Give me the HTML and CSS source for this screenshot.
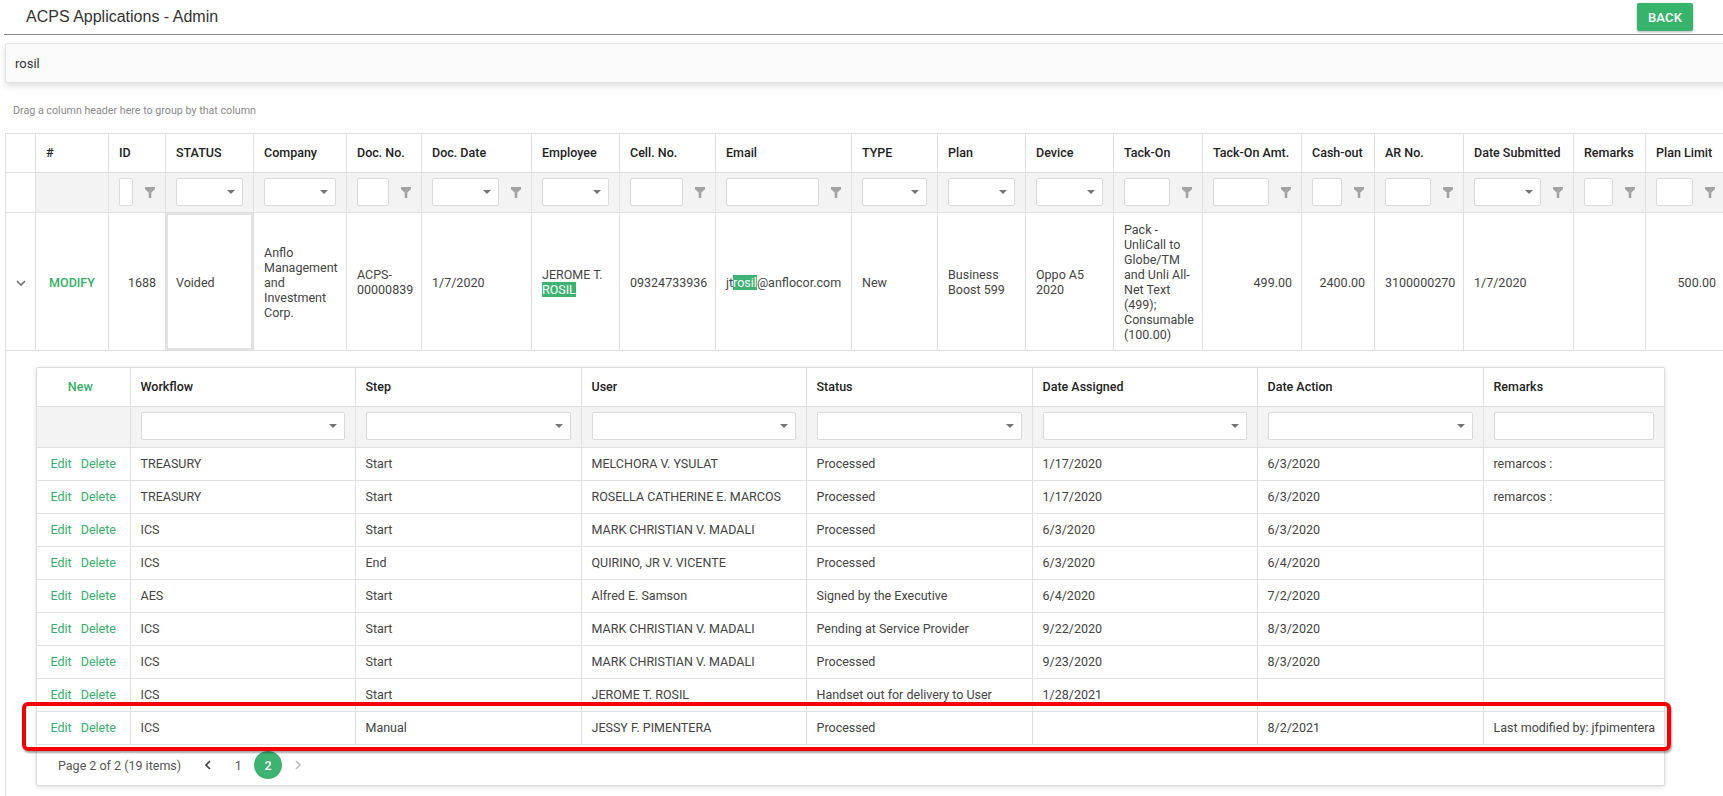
FILE: index.html
```html
<!DOCTYPE html>
<html lang="en">
<head>
<meta charset="utf-8">
<title>ACPS Applications - Admin</title>
<link rel="stylesheet" href="styles.css">
</head>
<body>
<svg class="defs" width="0" height="0" aria-hidden="true">
  <symbol id="funnel" viewBox="0 0 10 11"><path d="M0 0H10V2.2L6.3 5.4V11H3.7V5.4L0 2.2Z"/></symbol>
  <symbol id="caret" viewBox="0 0 8 4"><path d="M0 0H8L4 4Z"/></symbol>
  <symbol id="chev-down" viewBox="0 0 10 6"><polyline points="1,1 5,5 9,1"/></symbol>
  <symbol id="chev-left" viewBox="0 0 6 10"><polyline points="5,1 1,5 5,9"/></symbol>
  <symbol id="chev-right" viewBox="0 0 6 10"><polyline points="1,1 5,5 1,9"/></symbol>
</svg>

<header class="topbar">
  <h1 class="title">ACPS Applications - Admin</h1>
  <button class="btn-back">BACK</button>
</header>

<div class="search">rosil</div>

<div class="group-panel">Drag a column header here to group by that column</div>

<div class="grid-wrap">
<table class="grid">
  <colgroup>
    <col class="w30"><col class="w73"><col class="w57"><col class="w88"><col class="w93">
    <col class="w75"><col class="w110"><col class="w88"><col class="w96"><col class="w136">
    <col class="w86"><col class="w88"><col class="w88"><col class="w89"><col class="w99">
    <col class="w73"><col class="w89"><col class="w110"><col class="w72"><col class="w80">
  </colgroup>
  <thead>
    <tr class="hdr">
      <th></th><th>#</th><th>ID</th><th>STATUS</th><th>Company</th><th>Doc. No.</th><th>Doc. Date</th><th>Employee</th><th>Cell. No.</th><th>Email</th><th>TYPE</th><th>Plan</th><th>Device</th><th>Tack-On</th><th>Tack-On Amt.</th><th>Cash-out</th><th>AR No.</th><th>Date Submitted</th><th>Remarks</th><th>Plan Limit</th>
    </tr>
    <tr class="filters">
      <td class="f-blank"></td>
      <td></td>
      <td><div class="ft"><span class="inp"></span><svg class="fi"><use href="#funnel"/></svg></div></td>
      <td><div class="sel"><svg class="caret"><use href="#caret"/></svg></div></td>
      <td><div class="sel"><svg class="caret"><use href="#caret"/></svg></div></td>
      <td><div class="ft"><span class="inp"></span><svg class="fi"><use href="#funnel"/></svg></div></td>
      <td><div class="ft"><div class="sel"><svg class="caret"><use href="#caret"/></svg></div><svg class="fi"><use href="#funnel"/></svg></div></td>
      <td><div class="sel"><svg class="caret"><use href="#caret"/></svg></div></td>
      <td><div class="ft"><span class="inp"></span><svg class="fi"><use href="#funnel"/></svg></div></td>
      <td><div class="ft"><span class="inp"></span><svg class="fi"><use href="#funnel"/></svg></div></td>
      <td><div class="sel"><svg class="caret"><use href="#caret"/></svg></div></td>
      <td><div class="sel"><svg class="caret"><use href="#caret"/></svg></div></td>
      <td><div class="sel"><svg class="caret"><use href="#caret"/></svg></div></td>
      <td><div class="ft"><span class="inp"></span><svg class="fi"><use href="#funnel"/></svg></div></td>
      <td><div class="ft"><span class="inp"></span><svg class="fi"><use href="#funnel"/></svg></div></td>
      <td><div class="ft"><span class="inp"></span><svg class="fi"><use href="#funnel"/></svg></div></td>
      <td><div class="ft"><span class="inp"></span><svg class="fi"><use href="#funnel"/></svg></div></td>
      <td><div class="ft"><div class="sel"><svg class="caret"><use href="#caret"/></svg></div><svg class="fi"><use href="#funnel"/></svg></div></td>
      <td><div class="ft"><span class="inp"></span><svg class="fi"><use href="#funnel"/></svg></div></td>
      <td><div class="ft"><span class="inp"></span><svg class="fi"><use href="#funnel"/></svg></div></td>
    </tr>
  </thead>
  <tbody>
    <tr class="data">
      <td class="c-expand"><svg class="chev"><use href="#chev-down"/></svg></td>
      <td class="c-center"><span class="link strong">MODIFY</span></td>
      <td class="c-right">1688</td>
      <td class="c-focus">Voided</td>
      <td>Anflo<br>Management<br>and<br>Investment<br>Corp.</td>
      <td>ACPS-<br>00000839</td>
      <td>1/7/2020</td>
      <td>JEROME T.<br><span class="hl">ROSIL</span></td>
      <td>09324733936</td>
      <td>jt<span class="hl">rosil</span>@anflocor.com</td>
      <td>New</td>
      <td>Business<br>Boost 599</td>
      <td>Oppo A5<br>2020</td>
      <td>Pack -<br>UnliCall to<br>Globe/TM<br>and Unli All-<br>Net Text<br>(499);<br>Consumable<br>(100.00)</td>
      <td class="c-right">499.00</td>
      <td class="c-right">2400.00</td>
      <td>3100000270</td>
      <td>1/7/2020</td>
      <td></td>
      <td class="c-right">500.00</td>
    </tr>
    <tr class="detail-row">
      <td colspan="20">
        <div class="detail">
          <table class="dgrid">
            <colgroup>
              <col class="d93"><col class="d225"><col class="d226"><col class="d225"><col class="d226"><col class="d225"><col class="d226"><col class="d181">
            </colgroup>
            <thead>
              <tr class="hdr">
                <th class="th-new"><span class="link">New</span></th><th>Workflow</th><th>Step</th><th>User</th><th>Status</th><th>Date Assigned</th><th>Date Action</th><th>Remarks</th>
              </tr>
              <tr class="dfilters">
                <td></td>
                <td><div class="sel"><svg class="caret"><use href="#caret"/></svg></div></td>
                <td><div class="sel"><svg class="caret"><use href="#caret"/></svg></div></td>
                <td><div class="sel"><svg class="caret"><use href="#caret"/></svg></div></td>
                <td><div class="sel"><svg class="caret"><use href="#caret"/></svg></div></td>
                <td><div class="sel"><svg class="caret"><use href="#caret"/></svg></div></td>
                <td><div class="sel"><svg class="caret"><use href="#caret"/></svg></div></td>
                <td><span class="inp"></span></td>
              </tr>
            </thead>
            <tbody>
              <tr><td class="acts"><span class="link">Edit</span><span class="link">Delete</span></td><td>TREASURY</td><td>Start</td><td>MELCHORA V. YSULAT</td><td>Processed</td><td>1/17/2020</td><td>6/3/2020</td><td>remarcos :</td></tr>
              <tr><td class="acts"><span class="link">Edit</span><span class="link">Delete</span></td><td>TREASURY</td><td>Start</td><td>ROSELLA CATHERINE E. MARCOS</td><td>Processed</td><td>1/17/2020</td><td>6/3/2020</td><td>remarcos :</td></tr>
              <tr><td class="acts"><span class="link">Edit</span><span class="link">Delete</span></td><td>ICS</td><td>Start</td><td>MARK CHRISTIAN V. MADALI</td><td>Processed</td><td>6/3/2020</td><td>6/3/2020</td><td></td></tr>
              <tr><td class="acts"><span class="link">Edit</span><span class="link">Delete</span></td><td>ICS</td><td>End</td><td>QUIRINO, JR V. VICENTE</td><td>Processed</td><td>6/3/2020</td><td>6/4/2020</td><td></td></tr>
              <tr><td class="acts"><span class="link">Edit</span><span class="link">Delete</span></td><td>AES</td><td>Start</td><td>Alfred E. Samson</td><td>Signed by the Executive</td><td>6/4/2020</td><td>7/2/2020</td><td></td></tr>
              <tr><td class="acts"><span class="link">Edit</span><span class="link">Delete</span></td><td>ICS</td><td>Start</td><td>MARK CHRISTIAN V. MADALI</td><td>Pending at Service Provider</td><td>9/22/2020</td><td>8/3/2020</td><td></td></tr>
              <tr><td class="acts"><span class="link">Edit</span><span class="link">Delete</span></td><td>ICS</td><td>Start</td><td>MARK CHRISTIAN V. MADALI</td><td>Processed</td><td>9/23/2020</td><td>8/3/2020</td><td></td></tr>
              <tr><td class="acts"><span class="link">Edit</span><span class="link">Delete</span></td><td>ICS</td><td>Start</td><td>JEROME T. ROSIL</td><td>Handset out for delivery to User</td><td>1/28/2021</td><td></td><td></td></tr>
              <tr><td class="acts"><span class="link">Edit</span><span class="link">Delete</span></td><td>ICS</td><td>Manual</td><td>JESSY F. PIMENTERA</td><td>Processed</td><td></td><td>8/2/2021</td><td>Last modified by: jfpimentera</td></tr>
            </tbody>
          </table>
          <div class="pager">
            <span class="pager-info">Page 2 of 2 (19 items)</span>
            <span class="pg-nav"><svg class="pchev"><use href="#chev-left"/></svg></span>
            <span class="pg">1</span>
            <span class="pg pg-on">2</span>
            <span class="pg-nav pg-off"><svg class="pchev"><use href="#chev-right"/></svg></span>
          </div>
        </div>
      </td>
    </tr>
  </tbody>
</table>
</div>

<div class="annot"></div>
</body>
</html>
```
FILE: styles.css
```css
* { box-sizing: border-box; }
html, body { margin: 0; padding: 0; }
body {
  position: relative;
  width: 1723px;
  height: 796px;
  overflow: hidden;
  background: #fff;
  color: #444;
  font-family: Roboto, "Liberation Sans", Arial, sans-serif;
  font-size: 12.5px;
}
.defs { position: absolute; width: 0; height: 0; }

/* top bar */
.topbar {
  display: flex;
  align-items: center;
  justify-content: space-between;
  height: 35px;
  margin-left: 4px;
  padding: 0 30px 0 22px;
  border-bottom: 1px solid #8a8a8a;
}
.title {
  margin: 0;
  font: 400 16px "Liberation Sans", Arial, sans-serif;
  color: #333;
}
.btn-back {
  width: 56px;
  height: 28px;
  border: 0;
  border-radius: 2px;
  background: #36b46c;
  color: #fff;
  font: 500 13px Roboto, sans-serif;
  letter-spacing: 0.2px;
  box-shadow: 0 1px 3px rgba(0, 0, 0, 0.3);
  padding: 0;
}

/* search */
.search {
  display: flex;
  align-items: center;
  height: 40px;
  margin: 8px -6px 0 5px;
  padding-left: 9px;
  background: #fafafa;
  border: 1px solid #e2e2e2;
  border-radius: 2px;
  box-shadow: 0 3px 7px rgba(0, 0, 0, 0.13);
  font-size: 13px;
  color: #333;
}

.group-panel {
  height: 50px;
  padding: 22px 0 0 13px;
  font-size: 10.7px;
  line-height: 12px;
  color: #8a8a8a;
}

/* main grid */
.grid-wrap { margin-left: 5px; }
.grid {
  border-collapse: collapse;
  table-layout: fixed;
  width: 1720px;
}
.w30 { width: 30px; } .w57 { width: 57px; } .w72 { width: 72px; } .w73 { width: 73px; }
.w75 { width: 75px; } .w80 { width: 80px; } .w86 { width: 86px; } .w88 { width: 88px; }
.w89 { width: 89px; } .w93 { width: 93px; } .w96 { width: 96px; } .w99 { width: 99px; }
.w110 { width: 110px; } .w136 { width: 136px; }

.grid th, .grid td { border: 1px solid #e0e0e0; }
.hdr th {
  padding: 11px 10px 12px;
  line-height: 15px;
  font-weight: 500;
  color: #222;
  text-align: left;
  white-space: nowrap;
  overflow: hidden;
  background: #fff;
}
.hdr th.th-new { text-align: center; padding-left: 0; padding-right: 6px; }
.filters td {
  padding: 5px 10px 6px;
  background: #f3f3f3;
}
.filters td.f-blank { background: #fff; }

.ft { display: flex; align-items: center; }
.ft .inp, .ft .sel { flex: 1; min-width: 0; }
.inp, .sel {
  display: block;
  height: 28px;
  background: #fff;
  border: 1px solid #dadada;
  border-radius: 2px;
}
.sel {
  display: flex;
  align-items: center;
  justify-content: flex-end;
  padding-right: 7px;
}
.caret { width: 8px; height: 4px; fill: #757575; }
.fi { width: 10px; height: 11px; margin-left: 12px; fill: #a3a3a3; flex: none; }

.data td {
  padding: 9px 10px 8px;
  line-height: 15px;
  vertical-align: middle;
  white-space: nowrap;
  overflow: hidden;
  color: #444;
}
.data td.c-expand { padding: 0; text-align: center; }
.chev { width: 10px; height: 6px; fill: none; stroke: #6e6e6e; stroke-width: 1.6; display: inline-block; vertical-align: middle; }
.c-center { text-align: center; }
.c-right { text-align: right; }
.data td.c-right { padding-right: 9px; }
.data td.c-focus { box-shadow: inset 0 0 0 2px #e2e2e2; }
.link { color: #35b06a; }
.strong { font-weight: 500; }
.hl { background: #3cb371; color: #fff; }

/* detail */
.detail-row > td {
  padding: 16px 0 16px 30px;
  border-top: 1px solid #e0e0e0;
}
.detail {
  width: 1629px;
  border: 1px solid #dcdcdc;
  border-radius: 2px;
  box-shadow: 0 1px 4px rgba(0, 0, 0, 0.15);
  background: #fff;
}
.dgrid {
  border-collapse: collapse;
  table-layout: fixed;
  width: 1627px;
  border-style: hidden;
}
.d93 { width: 93px; } .d225 { width: 225px; } .d226 { width: 226px; } .d181 { width: 181px; }
.dgrid th, .dgrid td { border: 1px solid #e0e0e0; }
.dfilters td {
  padding: 5px 10px 7px;
  background: #f3f3f3;
}
.dgrid tbody td {
  padding: 8px 10px 9px;
  line-height: 15px;
  white-space: nowrap;
  overflow: hidden;
  color: #444;
}
.dgrid tbody td.acts {
  padding-left: 0;
  padding-right: 0;
  text-align: center;
}
.acts .link + .link { margin-left: 9px; }

.pager {
  display: flex;
  align-items: center;
  height: 41px;
  padding-left: 21px;
  border-top: 1px solid #e0e0e0;
  color: #555;
}
.pager-info { margin-right: 13px; }
.pg, .pg-nav {
  display: flex;
  align-items: center;
  justify-content: center;
  width: 28px;
  height: 28px;
  margin-right: 2px;
  color: #555;
}
.pg-on {
  background: #3cb371;
  color: #fff;
  font-weight: 500;
  border-radius: 50%;
}
.pchev { width: 6px; height: 10px; fill: none; stroke: #444; stroke-width: 1.6; }
.pg-off .pchev { stroke: #bdbdbd; }

/* red annotation box drawn over the grid */
.annot {
  position: absolute;
  left: 22px;
  top: 702px;
  width: 1649px;
  height: 49px;
  border: 4px solid #f40000;
  border-radius: 6px;
  box-shadow: 1px 2px 2px rgba(0, 0, 0, 0.35);
  pointer-events: none;
}
```
